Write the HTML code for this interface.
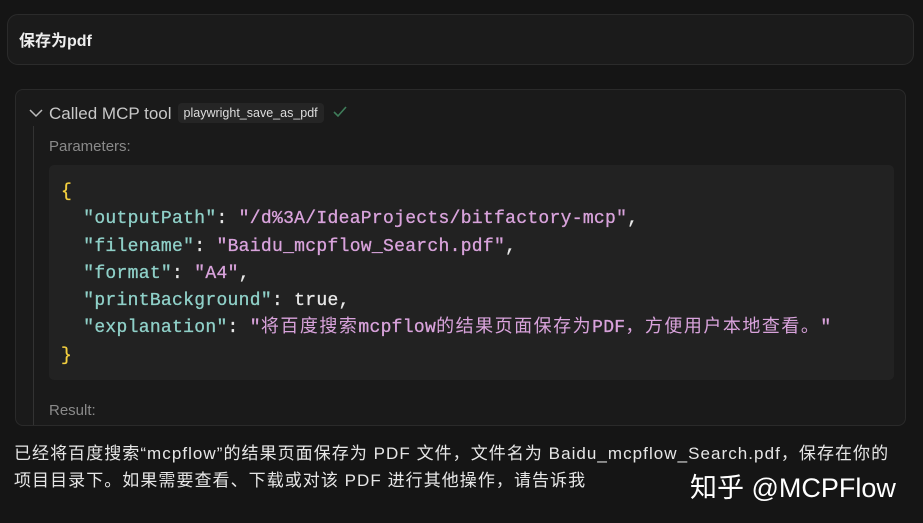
<!DOCTYPE html>
<html><head><meta charset="utf-8"><style>
body{margin:0;width:923px;height:523px;background:#151515;position:relative;overflow:hidden;font-family:"Liberation Sans","Noto Sans CJK SC",sans-serif;color:#ddd}
.top{position:absolute;left:7px;top:14px;width:905px;height:49px;border:1px solid #2b2b2b;border-radius:11px;background:#1b1b1b}
.top span{position:absolute;left:11px;top:12px;font-size:16px;font-weight:bold;color:#eee}
.tool{position:absolute;left:15px;top:89px;width:889px;height:335px;border:1px solid #2a2a2a;border-radius:8px;background:#1a1a1a;overflow:hidden}
.hdr{position:absolute;left:12px;top:13px;font-size:17px;color:#c8c8c8;white-space:nowrap}
.pill{display:inline-block;background:#252525;color:#ddd;font-size:12.5px;padding:3px 6px;border-radius:4px;margin-left:6px;vertical-align:2px}
.vl{position:absolute;left:17px;top:36px;width:1px;height:300px;background:#333}
.lbl{position:absolute;left:33px;font-size:15px;color:#8a8a8a}
.code{position:absolute;left:33px;top:75px;width:845px;height:215px;background:#222;border-radius:5px;font-family:"Liberation Mono","Noto Sans CJK SC",monospace;font-size:18px;letter-spacing:0.3px;line-height:27.3px;white-space:pre;padding-top:14px;box-sizing:border-box;padding-left:12px;-webkit-text-stroke:0.3px}
.k{color:#8fd0c8}.s{color:#d9a3dc}.b{color:#f4d03f}.w{color:#e8e8e8}
.cj{letter-spacing:1.5px;-webkit-text-stroke:0}
.txt{position:absolute;left:14px;top:440px;font-size:17px;letter-spacing:1.05px;line-height:27px;color:#e6e6e6;font-family:"Liberation Sans","Noto Sans CJK SC",sans-serif;white-space:nowrap}
.wm{position:absolute;left:690px;top:466px;font-size:27px;color:#fff;font-family:"Liberation Sans","Noto Sans CJK SC",sans-serif}
</style></head><body>
<div class="top"><span>保存为pdf</span></div>
<div class="tool">
<div class="hdr"><svg width="16" height="12" viewBox="0 0 16 12" style="margin-right:5px"><path d="M2 3l6 6 6-6" stroke="#bbb" stroke-width="1.5" fill="none"/></svg>Called MCP tool<span class="pill">playwright_save_as_pdf</span> <svg width="16" height="14" viewBox="0 0 16 14" style="margin-left:4px"><path d="M2 7l4 4 8-9" stroke="#3f7d5a" stroke-width="1.6" fill="none"/></svg></div>
<div class="vl"></div>
<div class="lbl" style="top:48px">Parameters:</div>
<div class="code"><span class="b">{</span>
  <span class="k">"outputPath"</span><span class="w">: </span><span class="s">"/d%3A/IdeaProjects/bitfactory-mcp"</span><span class="w">,</span>
  <span class="k">"filename"</span><span class="w">: </span><span class="s">"Baidu_mcpflow_Search.pdf"</span><span class="w">,</span>
  <span class="k">"format"</span><span class="w">: </span><span class="s">"A4"</span><span class="w">,</span>
  <span class="k">"printBackground"</span><span class="w">: true,</span>
  <span class="k">"explanation"</span><span class="w">: </span><span class="s">"<span class="cj">将百度搜索</span>mcpflow<span class="cj">的结果页面保存为</span>PDF<span class="cj">，方便用户本地查看。</span>"</span>
<span class="b">}</span></div>
<div class="lbl" style="top:312px">Result:</div>
</div>
<div class="txt">已经将百度搜索“mcpflow”的结果页面保存为 PDF 文件，文件名为 Baidu_mcpflow_Search.pdf，保存在你的<br>项目目录下。如果需要查看、下载或对该 PDF 进行其他操作，请告诉我</div>
<div class="wm">知乎 @MCPFlow</div>
</body></html>
